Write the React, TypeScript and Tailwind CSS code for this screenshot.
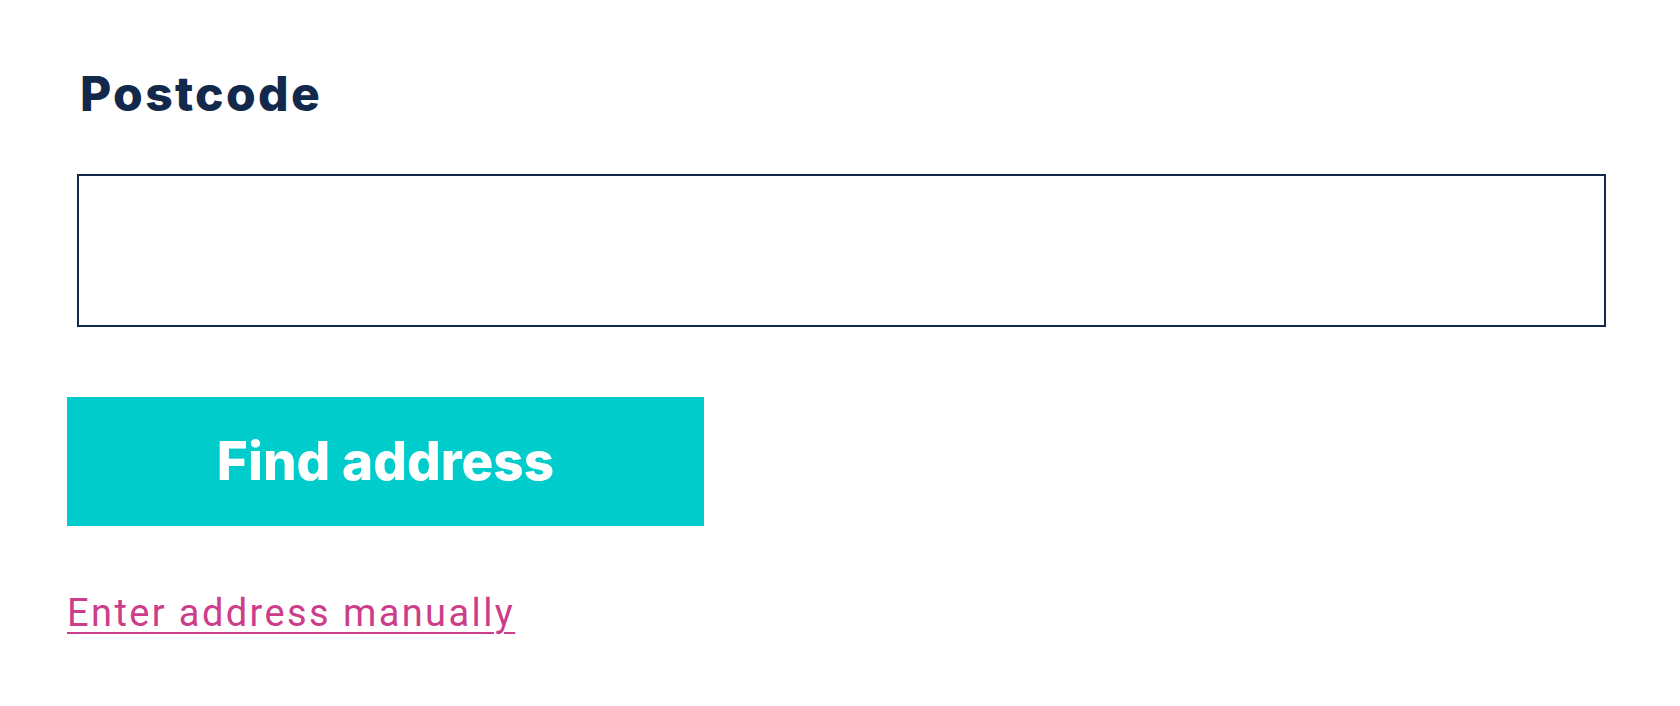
import React from "react";

export default function App() {
  return (
    <div className="min-h-[706px] w-full bg-white">
      <div className="flex flex-col items-start pl-[67px] pt-[70px]">
        <label
          htmlFor="postcode"
          className="ml-[13px] text-[48px] leading-[48px] font-extrabold tracking-[2.3px] text-[#13294b]"
          style={{ fontFamily: "Inter, 'Noto Sans', sans-serif" }}
        >
          Postcode
        </label>
        <input
          id="postcode"
          type="text"
          className="mt-[56px] ml-[10px] h-[153px] w-[1529px] border-2 border-[#13294b] bg-white px-4 text-[28px] outline-none"
        />
        <button
          type="button"
          className="mt-[70px] flex h-[129px] w-[637px] items-center justify-center bg-[#00cccc] text-[53px] font-extrabold text-white"
          style={{ fontFamily: "Inter, 'Noto Sans', sans-serif" }}
        >
          Find address
        </button>
        <a
          href="#"
          className="mt-[64px] text-[38px] leading-[46px] tracking-[2.4px] text-[#cc3d8a] underline decoration-2 underline-offset-[6px]"
          style={{ fontFamily: "Roboto, 'Noto Sans', sans-serif" }}
        >
          Enter address manually
        </a>
      </div>
    </div>
  );
}
